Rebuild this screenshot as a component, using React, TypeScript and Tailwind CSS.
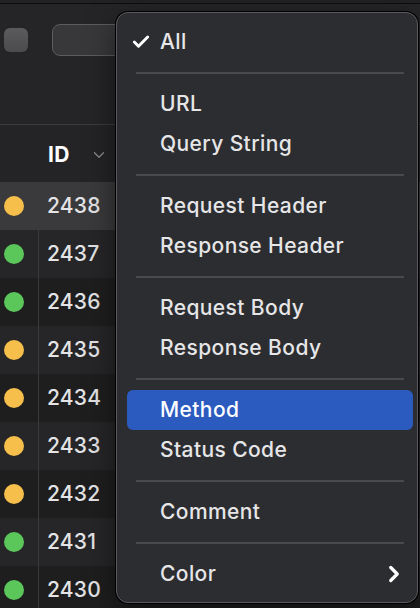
import { Check, ChevronDown, ChevronRight } from 'lucide-react';

type Row = { id: number; color: 'yellow' | 'green' };

const rows: Row[] = [
  { id: 2438, color: 'yellow' },
  { id: 2437, color: 'green' },
  { id: 2436, color: 'green' },
  { id: 2435, color: 'yellow' },
  { id: 2434, color: 'yellow' },
  { id: 2433, color: 'yellow' },
  { id: 2432, color: 'yellow' },
  { id: 2431, color: 'green' },
  { id: 2430, color: 'green' },
];

const groups: string[][] = [
  ['All'],
  ['URL', 'Query String'],
  ['Request Header', 'Response Header'],
  ['Request Body', 'Response Body'],
  ['Method', 'Status Code'],
  ['Comment'],
  ['Color'],
];

function MenuItem({ label }: { label: string }) {
  const active = label === 'Method';
  return (
    <div
      className={
        'h-[40px] flex items-center pl-[33px] pr-[16px] mr-[4px] ml-[10px] rounded-[6px] ' +
        (active ? 'bg-[#2c5bc0] text-white' : 'text-[#e6e6e8]')
      }
    >
      <div className="w-[0px] relative">
        {label === 'All' && (
          <Check className="absolute -left-[29px] -top-[10px] w-[20px] h-[20px] text-white" strokeWidth={3.5} />
        )}
      </div>
      <span className="flex-1">{label}</span>
      {label === 'Color' && <ChevronRight className="w-[26px] h-[26px] text-white -mr-[10px]" strokeWidth={3} />}
    </div>
  );
}

export default function App() {
  return (
    <div
      className="relative w-[420px] h-[608px] overflow-hidden bg-[#1c1c1e]"
      style={{ fontFamily: 'Inter, "Noto Sans", sans-serif' }}
    >
      <div className="h-[3px] bg-[#222224]" />
      <div className="h-[1px] bg-[#0d0d0e]" />

      {/* toolbar */}
      <div className="h-[120px] bg-[#252528] flex items-start gap-[24px] pl-[4px] pt-[20px]">
        <div className="mt-[4px] w-[24px] h-[24px] rounded-[6px] bg-gradient-to-b from-[#5b5b5e] to-[#4b4b4e]" />
        <div className="w-[200px] h-[32px] rounded-[8px] border border-[#5c5c60] bg-[#38383b]" />
      </div>

      {/* header */}
      <div className="h-[58px] border-t border-[#3b3b3e] bg-[#242427] flex items-center pl-[48px] pt-[2px]">
        <span className="text-[21px] font-bold text-white tracking-[0.3px]">ID</span>
        <ChevronDown className="ml-[20px] w-[18px] h-[18px] text-[#8a8a8e]" strokeWidth={1.75} />
      </div>

      {/* rows */}
      <div className="flex flex-col">
        {rows.map((r, i) => (
          <div
            key={r.id}
            className={
              'h-[48px] flex items-center ' +
              (i === 0 ? 'bg-[#3a3a3c]' : i % 2 === 1 ? 'bg-[#262628]' : 'bg-[#1e1e1f]')
            }
          >
            <div className="w-[39px] h-full flex items-center pl-[4px] border-r border-[#3a3a3c]">
              <div
                className={
                  'w-[20px] h-[20px] rounded-full ' + (r.color === 'yellow' ? 'bg-[#f6bf4c]' : 'bg-[#5bc65a]')
                }
              />
            </div>
            <span className="pl-[8px] text-[21px] font-medium tracking-[0.2px] text-[#e4e4e6]">{r.id}</span>
          </div>
        ))}
      </div>

      {/* dropdown menu */}
      <div className="absolute left-[116px] top-[12px] w-[302px] h-[591px] rounded-[12px] border border-[#5a5a5e] bg-[#2c2d30] py-[9px] text-[21px] font-medium tracking-[0.4px] shadow-[0_0_0_1px_#000,0_10px_30px_rgba(0,0,0,0.5)]">
        {groups.map((g, gi) => (
          <div key={gi}>
            {gi > 0 && (
              <div className="h-[22px] flex items-center">
                <div className="ml-[19px] w-[268px] h-[2px] bg-[#4a4a4e]" />
              </div>
            )}
            {g.map((label) => (
              <MenuItem key={label} label={label} />
            ))}
          </div>
        ))}
      </div>
    </div>
  );
}
